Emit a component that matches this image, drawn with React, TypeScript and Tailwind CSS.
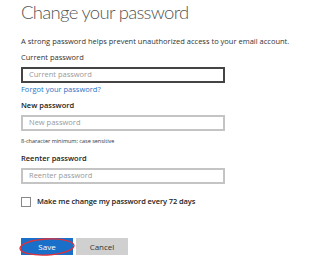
import React from "react";

const FONT = { fontFamily: '"Open Sans", "Noto Sans", Arial, sans-serif' };

function Field({ label, placeholder, dark }: { label: string; placeholder: string; dark?: boolean }) {
  return (
    <div>
      <p className={dark ? "text-[7.5px] text-[#333] leading-[10px]" : "text-[7.5px] font-semibold text-[#222] leading-[10px]"}>{label}</p>
      <div
        className={
          dark
            ? "mt-[5px] h-[16px] w-[204px] border-2 border-[#444] px-[6px] flex items-center text-[7.5px] text-[#999]"
            : "mt-[5px] h-[16px] w-[204px] border-2 border-[#c4c4c4] px-[6px] flex items-center text-[7.5px] text-[#999]"
        }
      >
        {placeholder}
      </div>
    </div>
  );
}

export default function App() {
  return (
    <div className="w-[300px] h-[273px] bg-white pl-[21px] overflow-hidden" style={FONT}>
      <h1
        className="text-[18.5px] font-light text-[#555] leading-[24px] tracking-[-0.7px]"
        style={{ fontFamily: 'Lato, "Open Sans", sans-serif' }}
      >
        Change your password
      </h1>

      <p className="mt-[12px] text-[7.5px] text-[#333] leading-[10px]">
        A strong password helps prevent unauthorized access to your email account.
      </p>

      <div className="mt-[6px]">
        <Field label="Current password" placeholder="Current password" dark />
        <p className="mt-[1px] text-[7.5px] text-[#2a72c4] leading-[10px]">Forgot your password?</p>
      </div>

      <div className="mt-[6px]">
        <Field label="New password" placeholder="New password" />
        <p className="mt-[6px] text-[5.5px] text-[#333] leading-[8px]">8-character minimum; case sensitive</p>
      </div>

      <div className="mt-[8px]">
        <Field label="Reenter password" placeholder="Reenter password" />
      </div>

      <label className="mt-[12px] flex items-center gap-[6px]">
        <span className="w-[10px] h-[10px] border border-[#888] bg-white" />
        <span className="text-[7.5px] font-semibold text-[#222] tracking-[-0.1px]">Make me change my password every 72 days</span>
      </label>

      <div className="mt-[31px] flex gap-[3px] relative">
        <button className="w-[52px] h-[17px] bg-[#1a6fc8] text-white text-[8px]">Save</button>
        <button className="w-[52px] h-[17px] bg-[#d0d0d0] text-[#333] text-[8px]">Cancel</button>
        <svg className="absolute left-[-3px] top-[-1px]" width="58" height="20" viewBox="0 0 58 20">
          <ellipse cx="29" cy="10" rx="27" ry="8" fill="none" stroke="#e0303a" strokeWidth="1.4" transform="rotate(-3 29 10)" />
        </svg>
      </div>
    </div>
  );
}
